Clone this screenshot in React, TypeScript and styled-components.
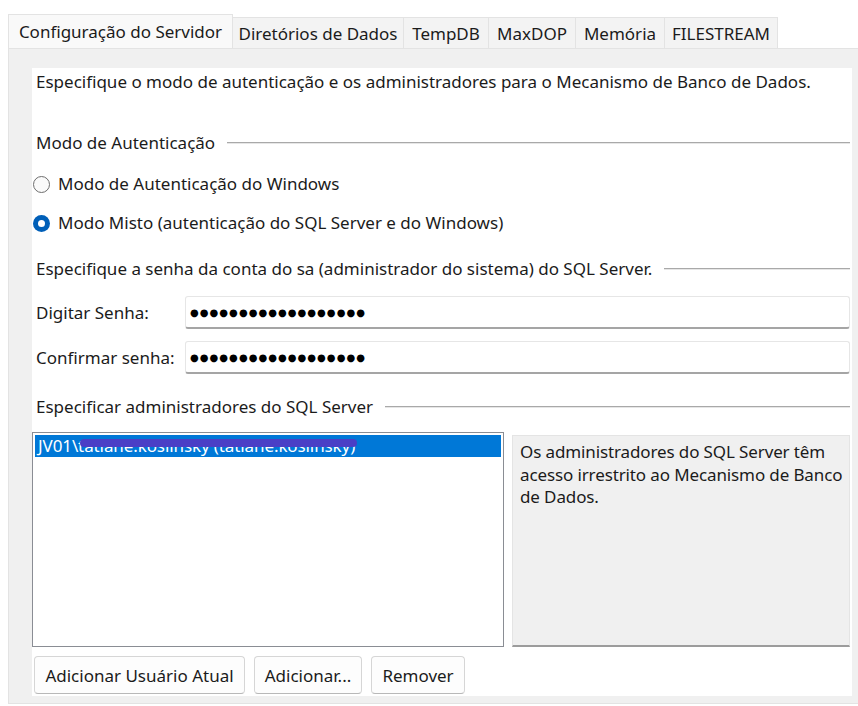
import React from "react";
import styled, { createGlobalStyle } from "styled-components";

const GlobalStyle = createGlobalStyle`
  body {
    margin: 0;
    background: #ffffff;
    font-family: "Noto Sans", "Open Sans", sans-serif;
    color: #1b1b1b;
  }
`;

const tabs = [
  { label: "Configuração do Servidor", width: 225 },
  { label: "Diretórios de Dados", width: 172 },
  { label: "TempDB", width: 86 },
  { label: "MaxDOP", width: 88 },
  { label: "Memória", width: 90 },
  { label: "FILESTREAM", width: 114 },
];

const buttons = [
  { label: "Adicionar Usuário Atual", width: 211 },
  { label: "Adicionar...", width: 108 },
  { label: "Remover", width: 94 },
];

const Page = styled.div`
  width: 858px;
  height: 706px;
  padding: 14px 0 0 8px;
  box-sizing: border-box;
  overflow: hidden;
`;

const TabStrip = styled.div`
  display: flex;
  align-items: flex-end;
  height: 34px;
`;

const Tab = styled.div<{ $active?: boolean; $w: number }>`
  width: ${p => p.$w}px;
  height: ${p => (p.$active ? 34 : 31)}px;
  box-sizing: border-box;
  display: flex;
  align-items: center;
  justify-content: center;
  font-size: 17px;
  background: ${p => (p.$active ? "#f9f9f9" : "#f3f3f3")};
  border: 1px solid #e3e3e3;
  border-bottom: none;
  margin-left: -1px;
  white-space: nowrap;
  &:first-child { margin-left: 0; }
`;

const Panel = styled.div`
  height: 656px;
  box-sizing: border-box;
  background: #f0f0f0;
  border: 1px solid #e3e3e3;
  border-right: none;
  padding: 19px 6px 7px 23px;
  display: flex;
`;

const Content = styled.div`
  flex: 1;
  background: #ffffff;
  display: flex;
  flex-direction: column;
  padding: 4px 2px 0 0;
  font-size: 17px;
`;

const Text = styled.div<{ $mt?: number }>`
  line-height: 20px;
  padding-left: 4px;
  margin-top: ${p => p.$mt ?? 0}px;
  white-space: nowrap;
`;

const GroupHeader = styled.div<{ $mt: number }>`
  display: flex;
  align-items: center;
  gap: 12px;
  margin-top: ${p => p.$mt}px;
  padding-left: 4px;
  line-height: 20px;
  white-space: nowrap;
`;

const Rule = styled.div`
  flex: 1;
  height: 0;
  border-top: 1px solid #a9a9a9;
  border-bottom: 1px solid #e6e6e6;
`;

const RadioRow = styled.label<{ $mt: number }>`
  display: flex;
  align-items: center;
  gap: 8px;
  margin-top: ${p => p.$mt}px;
  padding-left: 1px;
  line-height: 20px;
`;

const RadioDot = styled.span<{ $checked?: boolean }>`
  width: 17px;
  height: 17px;
  box-sizing: border-box;
  border-radius: 50%;
  flex: none;
  background: ${p => (p.$checked ? "#005fb8" : "#fafafa")};
  border: ${p => (p.$checked ? "none" : "1px solid #6e6e6e")};
  display: flex;
  align-items: center;
  justify-content: center;
  &::after {
    content: "";
    display: ${p => (p.$checked ? "block" : "none")};
    width: 7px;
    height: 7px;
    border-radius: 50%;
    background: #ffffff;
  }
`;

const FieldRow = styled.div<{ $mt: number }>`
  display: flex;
  align-items: center;
  margin-top: ${p => p.$mt}px;
  padding-left: 4px;
`;

const FieldLabel = styled.div`
  width: 149px;
  flex: none;
  white-space: nowrap;
`;

const PasswordBox = styled.div`
  flex: 1;
  height: 33px;
  box-sizing: border-box;
  background: #ffffff;
  border: 1px solid #e6e6e6;
  border-bottom: 2px solid #a5a5a5;
  border-radius: 3px;
  display: flex;
  align-items: center;
  padding-left: 4px;
  font-family: "DejaVu Sans", sans-serif;
  font-size: 10px;
  letter-spacing: 1.05px;
  color: #000;
`;

const AdminRow = styled.div`
  display: flex;
  gap: 8px;
  margin-top: 15px;
  height: 215px;
`;

const ListBox = styled.div`
  width: 472px;
  box-sizing: border-box;
  border: 1px solid #8a8d94;
  padding: 2px;
`;

const ListItem = styled.div<{ $selected?: boolean }>`
  position: relative;
  height: 22px;
  line-height: 22px;
  padding-left: 3px;
  background: ${p => (p.$selected ? "#0078d7" : "transparent")};
  color: ${p => (p.$selected ? "#ffffff" : "#1b1b1b")};
  font-size: 17px;
  letter-spacing: -0.1px;
  white-space: nowrap;
  overflow: hidden;
`;

const Redaction = styled.span`
  position: absolute;
  left: 45px;
  top: 4px;
  width: 277px;
  height: 8px;
  border-radius: 4px;
  background: #4a3fc6;
`;

const InfoBox = styled.div`
  flex: 1;
  margin-top: 3px;
  box-sizing: border-box;
  background: #f0f0f0;
  border: 1px solid #e4e4e4;
  border-bottom: 2px solid #9c9c9c;
  padding: 5px 4px 5px 7px;
  line-height: 22.5px;
  font-size: 17px;
  letter-spacing: -0.12px;
`;

const ButtonRow = styled.div`
  display: flex;
  gap: 9px;
  margin-top: 9px;
  padding-left: 2px;
`;

const Button = styled.button<{ $w: number }>`
  width: ${p => p.$w}px;
  height: 38px;
  box-sizing: border-box;
  padding: 0;
  margin: 0;
  background: #fdfdfd;
  border: 1px solid #d6d6d6;
  border-bottom-color: #b8b8b8;
  border-radius: 4px;
  font-family: "Noto Sans", "Open Sans", sans-serif;
  font-size: 17px;
  color: #1b1b1b;
  white-space: nowrap;
`;

export default function App() {
  return (
    <>
      <GlobalStyle />
      <Page>
        <TabStrip>
          {tabs.map((t, i) => (
            <Tab key={t.label} $active={i === 0} $w={t.width}>{t.label}</Tab>
          ))}
        </TabStrip>
        <Panel>
          <Content>
            <Text>Especifique o modo de autenticação e os administradores para o Mecanismo de Banco de Dados.</Text>
            <GroupHeader $mt={41}>
              Modo de Autenticação
              <Rule />
            </GroupHeader>
            <RadioRow $mt={21}>
              <RadioDot />
              Modo de Autenticação do Windows
            </RadioRow>
            <RadioRow $mt={19}>
              <RadioDot $checked />
              Modo Misto (autenticação do SQL Server e do Windows)
            </RadioRow>
            <GroupHeader $mt={26}>
              Especifique a senha da conta do sa (administrador do sistema) do SQL Server.
              <Rule />
            </GroupHeader>
            <FieldRow $mt={17}>
              <FieldLabel>Digitar Senha:</FieldLabel>
              <PasswordBox>{"●".repeat(18)}</PasswordBox>
            </FieldRow>
            <FieldRow $mt={12}>
              <FieldLabel>Confirmar senha:</FieldLabel>
              <PasswordBox>{"●".repeat(18)}</PasswordBox>
            </FieldRow>
            <GroupHeader $mt={23}>
              Especificar administradores do SQL Server
              <Rule />
            </GroupHeader>
            <AdminRow>
              <ListBox>
                <ListItem $selected>
                  JV01\tatiane.koslinsky (tatiane.koslinsky)
                  <Redaction />
                </ListItem>
              </ListBox>
              <InfoBox>
                Os administradores do SQL Server têm acesso irrestrito ao Mecanismo de Banco de Dados.
              </InfoBox>
            </AdminRow>
            <ButtonRow>
              {buttons.map(b => (
                <Button key={b.label} $w={b.width}>{b.label}</Button>
              ))}
            </ButtonRow>
          </Content>
        </Panel>
      </Page>
    </>
  );
}
